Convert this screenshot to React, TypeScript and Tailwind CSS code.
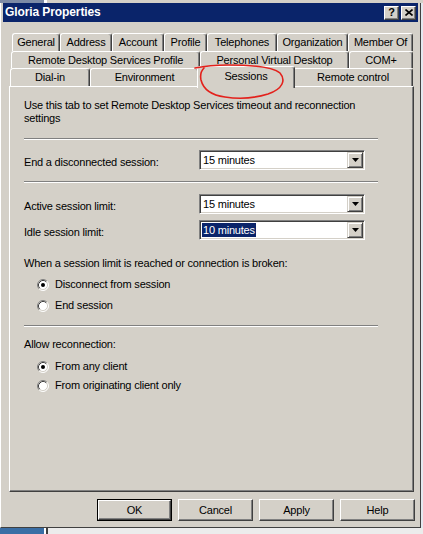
import React from "react";

function Tab({ className, label }: { className: string; label: string }) {
  return (
    <div
      className={`flex items-center justify-center border-t border-l border-white border-r border-r-[#404040] rounded-t-[3px] shadow-[inset_-1px_0_0_#808080] bg-[#d4d0c8] whitespace-nowrap ${className}`}
    >
      {label}
    </div>
  );
}

function Combo({ value, selected }: { value: string; selected?: boolean }) {
  return (
    <div className="w-[166px] h-[20px] bg-white border border-t-[#808080] border-l-[#808080] border-b-white border-r-white shadow-[inset_1px_1px_0_#404040,inset_-1px_-1px_0_#d4d0c8] flex items-center pl-[2px] pr-[1px]">
      <div className="flex-1 flex items-center">
        <span className={selected ? "bg-[#0a246a] text-white px-[1px] leading-[14px]" : "px-[1px] leading-[14px]"}>{value}</span>
      </div>
      <div className="w-[16px] h-[16px] bg-[#d4d0c8] border border-t-[#d4d0c8] border-l-[#d4d0c8] border-b-[#404040] border-r-[#404040] shadow-[inset_1px_1px_0_#ffffff,inset_-1px_-1px_0_#808080] flex items-center justify-center">
        <svg width="7" height="4" viewBox="0 0 7 4">
          <path d="M0 0H7L3.5 4Z" fill="#000" />
        </svg>
      </div>
    </div>
  );
}

function Radio({ checked, label, className }: { checked?: boolean; label: string; className: string }) {
  return (
    <div className={`flex items-center h-[13px] pl-[13px] ${className}`}>
      <svg width="12" height="12" viewBox="0 0 12 12" className="shrink-0">
        <circle cx="6" cy="6" r="5" fill="#fff" />
        <path d="M2.11 9.89A5.5 5.5 0 0 1 9.89 2.11" stroke="#808080" fill="none" />
        <path d="M9.89 2.11A5.5 5.5 0 0 1 2.11 9.89" stroke="#ffffff" fill="none" />
        <path d="M2.82 9.18A4.5 4.5 0 0 1 9.18 2.82" stroke="#404040" fill="none" />
        <path d="M9.18 2.82A4.5 4.5 0 0 1 2.82 9.18" stroke="#d4d0c8" fill="none" />
        {checked && <circle cx="6" cy="6" r="2" fill="#000" />}
      </svg>
      <span className="ml-[6px] leading-[13px]">{label}</span>
    </div>
  );
}

function Separator({ className }: { className: string }) {
  return <div className={`w-[354px] h-[2px] border-t border-t-[#808080] border-b border-b-white ${className}`} />;
}

function Button({ label, isDefault }: { label: string; isDefault?: boolean }) {
  if (isDefault) {
    return (
      <div className="w-[75px] h-[22px] border border-black">
        <div className="w-full h-full border border-t-white border-l-white border-b-[#404040] border-r-[#404040] shadow-[inset_-1px_-1px_0_#808080] flex items-center justify-center">
          {label}
        </div>
      </div>
    );
  }
  return (
    <div className="w-[75px] h-[22px] border border-t-white border-l-white border-b-[#404040] border-r-[#404040] shadow-[inset_-1px_-1px_0_#808080] flex items-center justify-center">
      {label}
    </div>
  );
}

export default function App() {
  return (
    <div className="w-[423px] h-[534px] bg-[#e4e8ef] overflow-hidden relative font-['Liberation_Sans',Arial,sans-serif] text-[11px] tracking-[-0.2px] text-black">
      {/* strip above window */}
      <div className="h-[3px] flex">
        <div className="w-[44px] bg-[#7d8ba6]" />
        <div className="w-[3px] bg-white" />
        <div className="flex-1 bg-[#d4d0c8]" />
      </div>

      {/* window */}
      <div className="w-[421px] h-[525px] bg-[#d4d0c8] border-r border-r-[#404040] border-b border-b-[#404040] border-l border-l-white flex flex-col">
        {/* title bar */}
        <div className="mx-[2px] h-[19px] bg-[#0a246a] flex items-center justify-between pl-[2px] pr-[2px]">
          <span className="text-white font-bold text-[12px] tracking-[-0.1px] leading-[19px]">Gloria Properties</span>
          <div className="flex gap-[2px]">
            <div className="w-[15px] h-[14px] bg-[#d4d0c8] border border-t-white border-l-white border-b-[#404040] border-r-[#404040] shadow-[inset_-1px_-1px_0_#808080] flex items-center justify-center font-bold text-[11px] leading-none">
              ?
            </div>
            <div className="w-[15px] h-[14px] bg-[#d4d0c8] border border-t-white border-l-white border-b-[#404040] border-r-[#404040] shadow-[inset_-1px_-1px_0_#808080] flex items-center justify-center">
              <svg width="8" height="7" viewBox="0 0 8 7">
                <path d="M0.5 0.5L7.5 6.5M7.5 0.5L0.5 6.5" stroke="#000" strokeWidth="1.6" />
              </svg>
            </div>
          </div>
        </div>

        {/* tab rows */}
        <div className="mt-[11px] flex h-[18px] ml-[11px]">
          <Tab className="w-[48px]" label="General" />
          <Tab className="w-[52px]" label="Address" />
          <Tab className="w-[52px]" label="Account" />
          <Tab className="w-[43px]" label="Profile" />
          <Tab className="w-[70px]" label="Telephones" />
          <Tab className="w-[71px]" label="Organization" />
          <Tab className="w-[65px]" label="Member Of" />
        </div>
        <div className="flex h-[17px] ml-[10px]">
          <Tab className="w-[189px]" label="Remote Desktop Services Profile" />
          <Tab className="w-[149px]" label="Personal Virtual Desktop" />
          <Tab className="w-[64px]" label="COM+" />
        </div>
        <div className="flex h-[18px] ml-[9px] items-end">
          <Tab className="w-[80px] h-[18px]" label="Dial-in" />
          <Tab className="w-[109px] h-[18px]" label="Environment" />
          <Tab className="w-[98px] h-[22px] -mx-[2px] -mb-[2px] relative z-10 pb-[3px]" label="Sessions" />
          <Tab className="w-[120px] h-[18px]" label="Remote control" />
        </div>

        {/* panel */}
        <div className="ml-[8px] w-[405px] h-[406px] border border-t-white border-l-white border-b-[#404040] border-r-[#404040] shadow-[inset_-1px_-1px_0_#808080] pl-[14px] pt-[12px] flex flex-col">
          <p className="leading-[13px] w-[360px]">
            Use this tab to set Remote Desktop Services timeout and reconnection settings
          </p>
          <Separator className="mt-[13px]" />
          <div className="mt-[10px] flex items-center h-[20px]">
            <span className="w-[175px] pt-[5px]">End a disconnected session:</span>
            <Combo value="15 minutes" />
          </div>
          <Separator className="mt-[11px]" />
          <div className="mt-[11px] flex items-center h-[20px]">
            <span className="w-[175px] pt-[5px]">Active session limit:</span>
            <Combo value="15 minutes" />
          </div>
          <div className="mt-[6px] flex items-center h-[20px]">
            <span className="w-[175px] pt-[5px]">Idle session limit:</span>
            <Combo value="10 minutes" selected />
          </div>
          <div className="mt-[17px] leading-[13px]">When a session limit is reached or connection is broken:</div>
          <Radio className="mt-[8px]" checked label="Disconnect from session" />
          <Radio className="mt-[8px]" label="End session" />
          <Separator className="mt-[13px]" />
          <div className="mt-[11px] leading-[13px]">Allow reconnection:</div>
          <Radio className="mt-[9px]" checked label="From any client" />
          <Radio className="mt-[6px]" label="From originating client only" />
        </div>

        {/* buttons */}
        <div className="mt-[7px] flex gap-[6px] ml-[96px]">
          <Button label="OK" isDefault />
          <Button label="Cancel" />
          <Button label="Apply" />
          <Button label="Help" />
        </div>
      </div>

      {/* strip below window */}
      <div className="flex h-[6px]">
        <div className="w-[44px] bg-[#3a6ea5]" />
        <div className="w-[2px] bg-white" />
        <div className="w-[2px] bg-[#404040]" />
        <div className="flex-1 bg-[#ececec]" />
      </div>

      {/* red hand-drawn annotation */}
      <svg className="absolute left-0 top-0 pointer-events-none z-20" width="423" height="534" viewBox="0 0 423 534">
        <path
          d="M195 68 C205 66 215 65 228 65 C250 65 272 66 280 73 C286 80 283 89 268 94 C255 98 238 99 225 97 C210 95 203 88 201 80 C200 75 201 71 204 68"
          stroke="#e3211c"
          strokeWidth="1.6"
          fill="none"
          strokeLinecap="round"
        />
      </svg>
    </div>
  );
}
